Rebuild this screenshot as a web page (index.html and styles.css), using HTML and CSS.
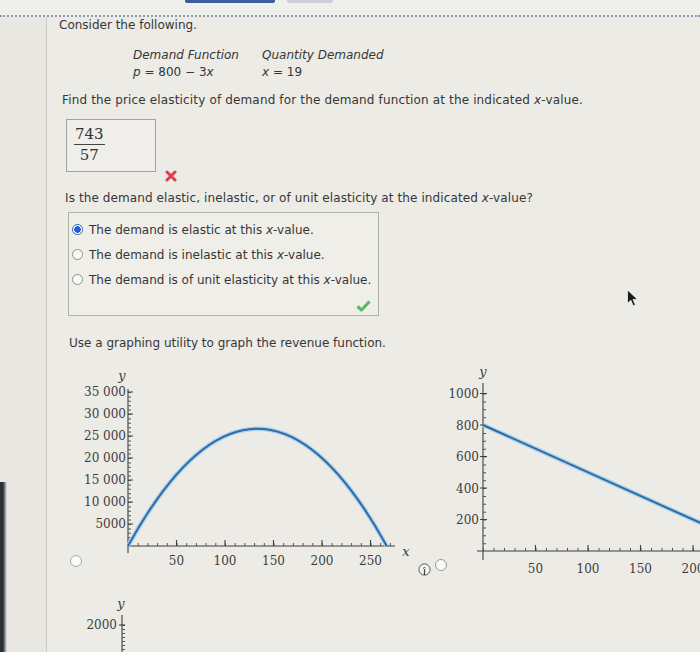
FILE: index.html
```html
<!DOCTYPE html>
<html lang="en">
<head>
<meta charset="utf-8">
<title>Price elasticity of demand</title>
<link rel="stylesheet" href="styles.css">
</head>
<body>
<div class="topbar">
  <span class="tb-btn tb-blue"></span>
  <span class="tb-btn tb-grey"></span>
</div>
<div class="page">
  <div class="gutter"></div>
  <main class="content">
    <p class="intro">Consider the following.</p>

    <div class="given">
      <div class="given-col first">
        <div class="head">Demand Function</div>
        <div class="eq"><i>p</i> = 800 &minus; 3<i>x</i></div>
      </div>
      <div class="given-col">
        <div class="head">Quantity Demanded</div>
        <div class="eq"><i>x</i> = 19</div>
      </div>
    </div>

    <p class="q1">Find the price elasticity of demand for the demand function at the indicated <i>x</i>-value.</p>

    <div class="answer-row">
      <div class="answer-box">
        <span class="frac"><span class="num">743</span><span class="den">57</span></span>
      </div>
      <svg class="xmark" width="12" height="12" viewBox="0 0 12 12" aria-label="incorrect">
        <path d="M2 2 L10 10 M10 2 L2 10" stroke="#e23a4d" stroke-width="3" stroke-linecap="round"/>
      </svg>
    </div>

    <p class="q2">Is the demand elastic, inelastic, or of unit elasticity at the indicated <i>x</i>-value?</p>

    <div class="options">
      <div class="opt"><span class="radio on"></span><span class="opt-text">The demand is elastic at this <i>x</i>-value.</span></div>
      <div class="opt"><span class="radio"></span><span class="opt-text">The demand is inelastic at this <i>x</i>-value.</span></div>
      <div class="opt"><span class="radio"></span><span class="opt-text">The demand is of unit elasticity at this <i>x</i>-value.</span></div>
      <div class="check-row">
        <svg class="check" width="15" height="12" viewBox="0 0 15 12" aria-label="correct">
          <path d="M1.5 6.5 L5.5 10 L13.5 1.5" fill="none" stroke="#5db65a" stroke-width="3" stroke-linejoin="round"/>
        </svg>
      </div>
    </div>

    <p class="q3">Use a graphing utility to graph the revenue function.</p>

    <div class="graphs">
      <div class="graph g1">
        <span class="radio big"></span>
        <svg class="plot" width="335" height="212" viewBox="0 0 335 212">
          <text class="axis-name" x="40" y="17">y</text>
          <g class="tick-labels" text-anchor="end">
            <text x="44" y="33">35 000</text>
            <text x="44" y="55">30 000</text>
            <text x="44" y="77">25 000</text>
            <text x="44" y="99">20 000</text>
            <text x="44" y="121">15 000</text>
            <text x="44" y="143">10 000</text>
            <text x="44" y="165">5000</text>
          </g>
          <g class="axes">
            <line x1="46" y1="26" x2="46" y2="190"/>
            <line x1="46" y1="183" x2="313" y2="183"/>
            <line class="minor" x1="47.5" y1="29" x2="47.5" y2="183" stroke-dasharray="1 3.4"/>
            <line class="minor" x1="46" y1="181.5" x2="310" y2="181.5" stroke-dasharray="1 8.7"/>
            <path d="M46 29h5M46 51h5M46 73h5M46 95h5M46 117h5M46 139h5M46 161h5M94.5 183v-6M143 183v-6M191.5 183v-6M240 183v-6M288.5 183v-6"/>
          </g>
          <path class="halo" d="M46 183 Q175.3 -51.7 304.7 183"/>
          <path class="curve" d="M46 183 Q175.3 -51.7 304.7 183"/>
          <g class="tick-labels" text-anchor="middle">
            <text x="94.5" y="202">50</text>
            <text x="143" y="202">100</text>
            <text x="191.5" y="202">150</text>
            <text x="240" y="202">200</text>
            <text x="288.5" y="202">250</text>
          </g>
          <text class="axis-name" x="324" y="193">x</text>
        </svg>
      </div>

      <div class="graph g2">
        <div class="ctrls">
          <svg class="info" width="13" height="13" viewBox="0 0 13 13" aria-label="info">
            <circle cx="6.5" cy="6.5" r="5.6" fill="#f4f4f2" stroke="#555" stroke-width="1"/>
            <path d="M6.5 6 V12" stroke="#444" stroke-width="1.2"/>
            <path d="M5 5.5 Q6.5 3.5 7.5 5.2" fill="none" stroke="#444" stroke-width="1"/>
          </svg>
          <span class="radio"></span>
        </div>
        <svg class="plot" width="253" height="215" viewBox="0 0 253 215">
          <text class="axis-name" x="34" y="16">y</text>
          <g class="tick-labels" text-anchor="end">
            <text x="30" y="38">1000</text>
            <text x="30" y="69.5">800</text>
            <text x="30" y="101">600</text>
            <text x="30" y="132.5">400</text>
            <text x="30" y="164">200</text>
          </g>
          <g class="axes">
            <line x1="34" y1="23" x2="34" y2="200"/>
            <line x1="28" y1="191" x2="253" y2="191"/>
            <line class="minor" x1="35.5" y1="33.5" x2="35.5" y2="191" stroke-dasharray="1 6.875"/>
            <line class="minor" x1="34" y1="189.5" x2="253" y2="189.5" stroke-dasharray="1 9.5"/>
            <path d="M31 33.5h7M31 65h7M31 96.5h7M31 128h7M31 159.5h7M86.5 191v-6M139 191v-6M191.5 191v-6M244 191v-6"/>
          </g>
          <path class="halo" d="M34 65 L253 163.6"/>
          <path class="curve" d="M34 65 L253 163.6"/>
          <g class="tick-labels" text-anchor="middle">
            <text x="86.5" y="213">50</text>
            <text x="139" y="213">100</text>
            <text x="191.5" y="213">150</text>
            <text x="244" y="213">200</text>
          </g>
        </svg>
      </div>
    </div>

    <div class="graph g3">
      <svg class="plot" width="60" height="57" viewBox="0 0 60 57">
        <text class="axis-name" x="39" y="13">y</text>
        <g class="tick-labels" text-anchor="end">
          <text x="35" y="34">2000</text>
        </g>
        <g class="axes">
          <line x1="40" y1="20" x2="40" y2="57"/>
          <line class="minor" x1="41.5" y1="30" x2="41.5" y2="57" stroke-dasharray="1 3"/>
          <path d="M37 30h6"/>
        </g>
      </svg>
    </div>
  </main>
</div>

<svg class="cursor" width="13" height="19" viewBox="0 0 13 19" aria-hidden="true">
  <path d="M1.5 1 L1.5 14.5 L4.8 11.3 L7.2 16.8 L9.4 15.8 L7 10.4 L11.5 10.4 Z" fill="#1a1a1a" stroke="#f2f2f2" stroke-width="0.8"/>
</svg>
</body>
</html>
```

FILE: styles.css
```css
html, body {
  margin: 0;
  padding: 0;
}

body {
  width: 700px;
  height: 652px;
  overflow: hidden;
  position: relative;
  background: #ecebe6;
  color: #363636;
  font-family: "DejaVu Sans", Verdana, sans-serif;
  font-size: 12px;
  line-height: 16px;
}

.topbar {
  display: flex;
  align-items: flex-start;
  gap: 12px;
  padding-left: 185px;
  background: #efefec;
  border-bottom: 2px dotted #8f99ab;
  box-sizing: border-box;
  height: 17px;
}

.tb-btn {
  display: block;
  height: 3px;
  border-radius: 0 0 2px 2px;
}

.tb-blue {
  width: 90px;
  background: #3f5d98;
}

.tb-grey {
  width: 46px;
  background: #c9ced8;
}

.page {
  display: flex;
  min-height: 635px;
}

.gutter {
  width: 46px;
  flex: none;
  border-right: 1px solid #c9c8c1;
  background: linear-gradient(to right, #2b2f36 0, #2b2f36 3px, #e8e7e2 7px) bottom left / 100% 170px no-repeat, #e8e7e2;
}

.content {
  flex: 1;
  padding-left: 12px;
  min-width: 0;
}

p {
  margin: 0;
}

.intro {
  margin: 0;
}

.given {
  display: flex;
  margin: 14px 0 0 74px;
  line-height: 17px;
}

.given-col.first {
  width: 129px;
}

.given .head {
  font-style: italic;
}

.q1 {
  margin: 11px 0 0 3px;
  letter-spacing: 0.15px;
}

.answer-row {
  display: flex;
  align-items: flex-end;
  margin: 11px 0 0 7px;
}

.answer-box {
  width: 90px;
  height: 53px;
  box-sizing: border-box;
  border: 1px solid #a3a39e;
  background: #efeeea;
  padding: 5px 0 0 7px;
}

.frac {
  display: inline-flex;
  flex-direction: column;
  align-items: center;
  font-family: "DejaVu Serif", "Liberation Serif", serif;
  font-size: 15px;
  line-height: 18px;
  color: #333;
}

.frac .num {
  border-bottom: 1px solid #444;
  padding: 0 1px 1px;
}

.frac .den {
  padding-top: 1px;
}

.xmark {
  display: block;
  margin: 0 0 -10px 9px;
}

.q2 {
  margin: 18px 0 0 6px;
  letter-spacing: 0.1px;
}

.options {
  width: 311px;
  height: 104px;
  box-sizing: border-box;
  margin: 6px 0 0 9px;
  border: 1px solid #b0b2a6;
  padding: 4px 4px 4px 3px;
  background: #efeee9;
}

.opt {
  display: flex;
  align-items: center;
  height: 25px;
  white-space: nowrap;
}

.radio {
  display: inline-block;
  flex: none;
  width: 11px;
  height: 11px;
  box-sizing: border-box;
  border-radius: 50%;
  border: 1px solid #8f8f8c;
  background: #fafaf8;
  margin-right: 6px;
}

.radio.on {
  border: 1px solid #2a62c4;
  background: radial-gradient(circle, #1f5fcf 0, #1f5fcf 3px, #ffffff 3.6px);
}

.check-row {
  display: flex;
  justify-content: flex-end;
  align-items: flex-end;
  height: 20px;
  padding-right: 3px;
}

.check {
  display: block;
}

.q3 {
  margin: 19px 0 0 10px;
}

.graphs {
  display: flex;
  margin: 9px 0 0 11px;
  width: 700px;
}

.graph {
  display: flex;
  align-items: flex-end;
  flex: none;
}

.g1 .radio.big {
  width: 12px;
  height: 12px;
  border-color: #a9aaa6;
  margin: 0 0 8px 0;
}

.g2 .ctrls {
  width: 32px;
  display: flex;
  align-items: flex-start;
  gap: 4px;
  margin-bottom: -1px;
  padding-left: 1px;
  box-sizing: border-box;
}

.g2 .ctrls .radio {
  width: 12px;
  height: 12px;
  margin: -4px 0 0 0;
  border-color: #9a9b97;
}

.info {
  display: block;
}

.g3 {
  margin: 20px 0 0 23px;
}

.plot {
  display: block;
  overflow: visible;
}

.tick-labels text {
  font-family: "DejaVu Serif", "Liberation Serif", serif;
  font-size: 12px;
  fill: #3d3d3d;
}

.axis-name {
  font-family: "DejaVu Serif", "Liberation Serif", serif;
  font-style: italic;
  font-size: 13px;
  fill: #3d3d3d;
  text-anchor: middle;
}

.axes line,
.axes path {
  stroke: #3f3f3f;
  stroke-width: 1.1;
  fill: none;
}

.axes line.minor {
  stroke-width: 3;
  stroke: #555;
}

.halo {
  fill: none;
  stroke: #a7d0ee;
  stroke-width: 4.5;
}

.curve {
  fill: none;
  stroke: #2f6aa3;
  stroke-width: 2;
}

.cursor {
  position: absolute;
  left: 626px;
  top: 289px;
}
```
